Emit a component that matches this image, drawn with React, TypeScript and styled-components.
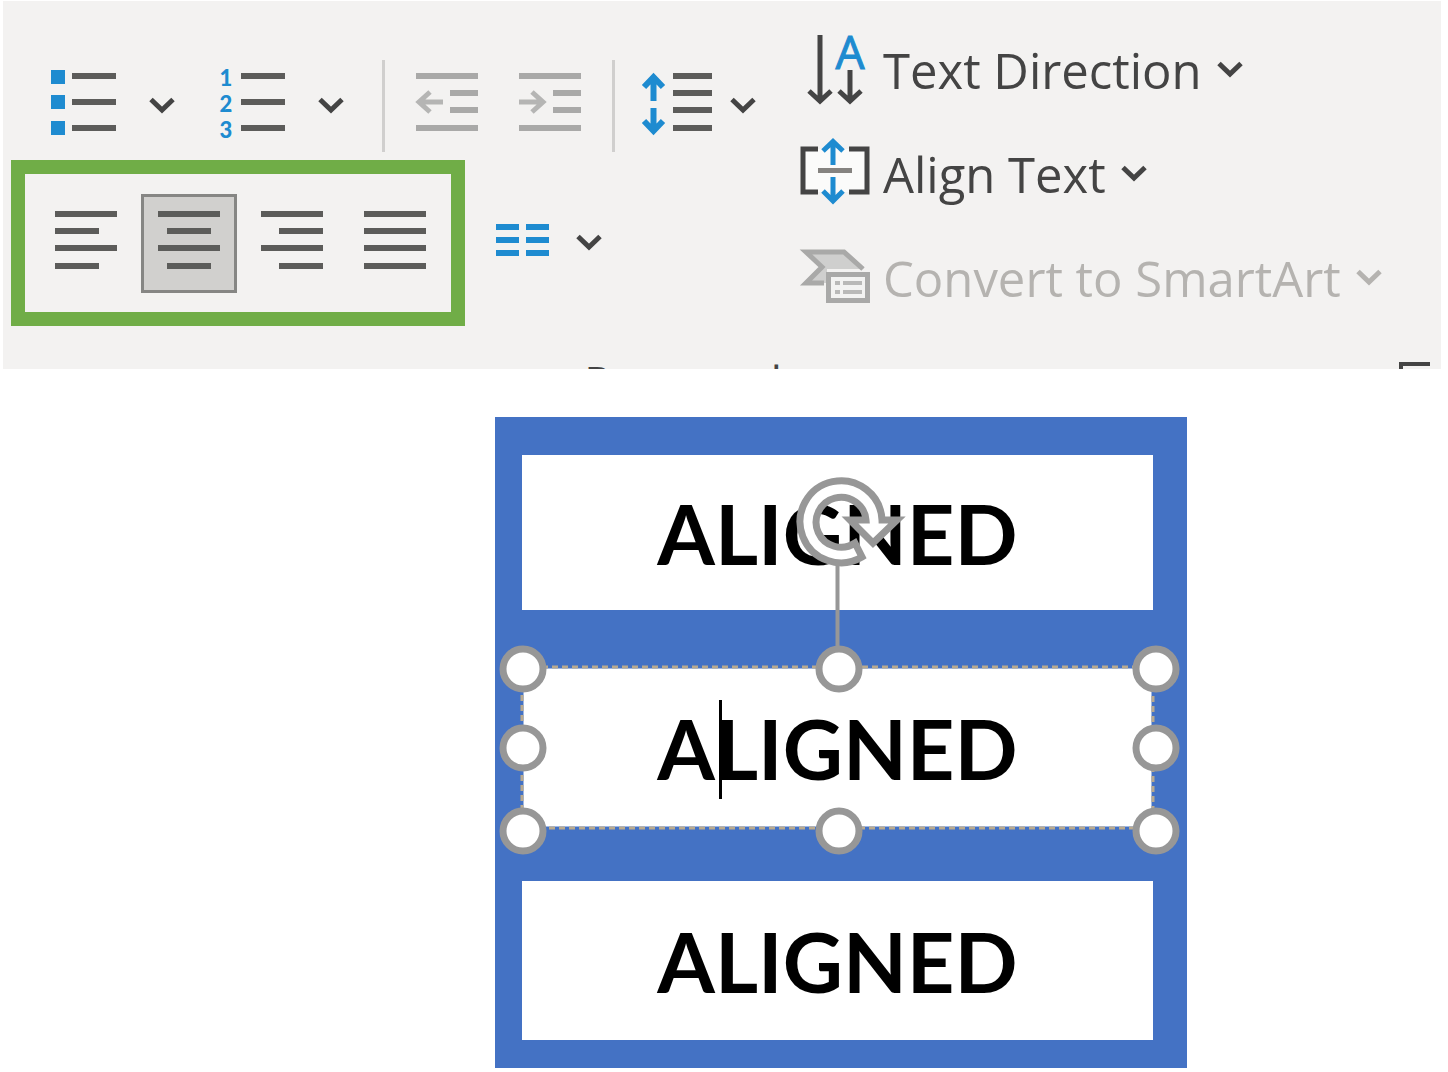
import React from "react";
import styled, { createGlobalStyle } from "styled-components";

const ink = "#444444";
const line = "#5c5c5a";
const blue = "#1e8bd0";
const faded = "#a9a9a8";

const GlobalStyle = createGlobalStyle`
  *, *::before, *::after { box-sizing: border-box; }
  body {
    margin: 0;
    background: #ffffff;
    font-family: "Open Sans", "Noto Sans", sans-serif;
  }
  svg { display: block; flex: none; }
`;

const Ribbon = styled.section`
  margin: 1px 7px 0 3px;
  background: #f3f2f1;
`;

const Tools = styled.div`
  display: flex;
  align-items: flex-start;
  gap: 32px;
`;

const LeftTools = styled.div`
  padding: 59px 0 0 8px;
`;

const ListRow = styled.div`
  display: flex;
  align-items: stretch;
  height: 92px;
  padding-left: 36px;
`;

const ListGroup = styled.div`
  display: flex;
  gap: 32px;
  margin-right: 4px;
`;

const IndentGroup = styled.div`
  display: flex;
  gap: 29px;
`;

const Split = styled.div<{ $gap: number }>`
  display: flex;
  align-items: center;
  gap: ${(p) => p.$gap}px;
`;

const Divider = styled.div`
  width: 3px;
  margin: 0 25px;
  background: #d0cfce;
`;

const ToolButton = styled.button`
  display: flex;
  align-items: center;
  justify-content: center;
  padding: 0;
  border: 0;
  background: transparent;
`;

const AlignRow = styled.div`
  display: flex;
  align-items: center;
  gap: 21px;
  margin-top: 8px;
`;

const Highlight = styled.div`
  display: flex;
  gap: 7px;
  padding: 20px 8px 19px 13px;
  border: 14px solid #70ad47;
`;

const AlignButton = styled(ToolButton)<{ $active?: boolean }>`
  width: 96px;
  height: 99px;
  border: 3px solid ${(p) => (p.$active ? "#868684" : "transparent")};
  background: ${(p) => (p.$active ? "#d1d0ce" : "transparent")};
`;

const TextTools = styled.div`
  display: flex;
  flex-direction: column;
  align-items: flex-start;
  padding-top: 17px;
`;

const TextButton = styled(ToolButton)`
  height: 104px;
  color: ${ink};
  font: 400 49px/64px "Open Sans", "Noto Sans", sans-serif;
  white-space: nowrap;

  &:disabled {
    color: #b5b3b0;
  }
`;

const ButtonText = styled.span`
  margin: 0 6px 0 12px;
`;

const RibbonFooter = styled.div`
  display: flex;
  height: 39px;
  padding-top: 27px;
  overflow: hidden;
`;

const GroupName = styled.div`
  flex: 1;
  color: ${ink};
  font-size: 44px;
  line-height: 48px;
  text-align: center;
`;

const Launcher = styled(ToolButton)`
  width: 62px;
  height: 48px;
  justify-content: flex-start;
`;

const Slide = styled.main`
  width: 692px;
  margin: 48px 0 0 495px;
  padding: 38px 34px 28px 27px;
  background: #4472c4;
`;

const TextShape = styled.div<{ $height: number; $after?: number }>`
  position: relative;
  display: flex;
  align-items: center;
  justify-content: center;
  height: ${(p) => p.$height}px;
  margin-bottom: ${(p) => p.$after ?? 0}px;
  background: #ffffff;
  color: #000000;
  font: 700 83px/100px Lato, sans-serif;
`;

const ShapeInput = styled.input`
  width: 100%;
  height: 100px;
  padding: 0;
  border: 0;
  outline: 0;
  background: transparent;
  color: inherit;
  font: inherit;
  text-align: center;
`;

const SelectionLayer = styled.svg`
  position: absolute;
  left: -27px;
  top: -197px;
  pointer-events: none;
`;

type Bar = [x: number, y: number, width: number];

function Bars({ bars, color = line, h = 6 }: { bars: Bar[]; color?: string; h?: number }) {
  return (
    <g fill={color}>
      {bars.map(([x, y, w]) => (
        <rect key={`${x}-${y}`} x={x} y={y} width={w} height={h} />
      ))}
    </g>
  );
}

function Chevron({ color = ink }: { color?: string }) {
  return (
    <svg width="44" height="44" viewBox="0 0 44 44" fill="none" stroke={color} strokeWidth="5">
      <path d="M11 15.500 L22 26 L33 15.500" />
    </svg>
  );
}

function Menu({ label }: { label: string }) {
  return (
    <ToolButton type="button" aria-label={label} aria-haspopup="menu">
      <Chevron />
    </ToolButton>
  );
}

function BulletsIcon() {
  return (
    <svg width="74" height="92" viewBox="47 60 74 92">
      <g fill={blue}>
        <rect x="51" y="70" width="14" height="14" />
        <rect x="51" y="95" width="14" height="14" />
        <rect x="51" y="121" width="14" height="14" />
      </g>
      <Bars bars={[[72, 73, 44], [72, 99, 44], [72, 125, 44]]} />
    </svg>
  );
}

function NumberingIcon() {
  return (
    <svg width="74" height="92" viewBox="216 60 74 92">
      <g fill={blue} fontFamily="Lato, sans-serif" fontWeight="900" fontSize="22" textAnchor="middle">
        <text x="226" y="86">1</text>
        <text x="226" y="112">2</text>
        <text x="226" y="138">3</text>
      </g>
      <Bars bars={[[241, 73, 44], [241, 99, 44], [241, 125, 44]]} />
    </svg>
  );
}

function IndentIcon({ out = false }: { out?: boolean }) {
  return (
    <svg width="74" height="92" viewBox="410 60 74 92">
      <Bars color={faded} bars={[[416, 73, 62], [450, 90, 28], [450, 107, 28], [416, 125, 62]]} />
      <path
        d={out ? "M443 102 H420 M430 92 L419 102 L430 112" : "M416 102 H439 M429 92 L440 102 L429 112"}
        fill="none"
        stroke="#b5b5b4"
        strokeWidth="5"
      />
    </svg>
  );
}

function SpacingIcon() {
  return (
    <svg width="74" height="92" viewBox="640 60 74 92">
      <path
        d="M653.500 101 V78 M644 87 L653.500 77 L663 87 M653.500 108 V131 M644 121 L653.500 131 L663 121"
        fill="none"
        stroke={blue}
        strokeWidth="6"
      />
      <Bars bars={[[673, 73, 39], [673, 90, 39], [673, 107, 39], [673, 125, 39]]} />
    </svg>
  );
}

function ColumnsIcon() {
  return (
    <svg width="74" height="92" viewBox="486 197 74 92">
      <Bars
        color={blue}
        bars={[[496, 224, 23], [526, 224, 23], [496, 237, 23], [526, 237, 23], [496, 250, 23], [526, 250, 23]]}
      />
    </svg>
  );
}

function AlignIcon({ kind }: { kind: "left" | "center" | "right" | "justify" }) {
  const short = kind === "justify" ? 62 : 44;
  const start = kind === "center" ? 9 : kind === "right" ? 18 : 0;
  return (
    <svg width="62" height="93" viewBox="0 0 62 93">
      <Bars bars={[[0, 14, 62], [start, 31, short], [0, 48, 62], [start, 66, short]]} />
    </svg>
  );
}

function DirectionIcon() {
  return (
    <svg width="74" height="104" viewBox="797 18 74 104" fill="none" stroke={ink} strokeWidth="5">
      <path d="M820 35 V101 M809 91 L820 101 L831 91 M850 70 V101 M839 91 L850 101 L861 91" />
      <text x="850" y="69" fill={blue} stroke={blue} strokeWidth="1" fontFamily="Open Sans, sans-serif" fontSize="46" textAnchor="middle">
        A
      </text>
    </svg>
  );
}

function AlignTextIcon() {
  return (
    <svg width="74" height="104" viewBox="797 122 74 104" fill="none" strokeWidth="5">
      <rect x="803" y="149" width="65" height="43" fill="#fbfbfa" />
      <path d="M818 149 H803 V192 H818 M849 149 H867 V192 H849" stroke={ink} />
      <path d="M818 170.500 H852" stroke="#858380" />
      <path d="M833 165 V143 M823 151 L833 141.500 L843 151 M833 177 V200 M823 191 L833 201 L843 191" stroke={blue} />
    </svg>
  );
}

function SmartArtIcon() {
  return (
    <svg width="74" height="104" viewBox="797 226 74 104" strokeWidth="5">
      <path d="M805 252 H844 L864 269 H827 V283 H806 L822 267 Z" fill="#cfcfce" />
      <path d="M863 269 L844 252 H806 L822 267 L806 283 H824" fill="none" stroke={faded} />
      <rect x="828.500" y="274.500" width="39" height="26" fill="#f3f3f2" stroke={faded} />
      <path d="M835 283 H840 M843 283 H862 M835 292 H840 M843 292 H862" stroke="#b9b9b8" strokeWidth="4" />
    </svg>
  );
}

const handles = [
  [523, 669], [839, 669], [1156, 669],
  [523, 748], [1156, 748],
  [523, 831], [839, 831], [1156, 831],
];

function Selection() {
  return (
    <SelectionLayer width="692" height="400" viewBox="495 470 692 400" aria-hidden="true">
      <rect x="522" y="667" width="631" height="161" fill="none" stroke="#4472c4" strokeWidth="3" />
      <rect x="522" y="667" width="631" height="161" fill="none" stroke="#b9aa8f" strokeWidth="3" strokeDasharray="6 4" />
      <path d="M837.500 563 V650" stroke="#979797" strokeWidth="4" />
      <path
        d="M882 520 A41 41 0 1 0 862 557 L855 543 A25 25 0 1 1 866 520 H850 L873 543 L897 520 Z"
        fill="#ffffff"
        stroke="#979797"
        strokeWidth="7"
      />
      <g fill="#ffffff" stroke="#979797" strokeWidth="7">
        {handles.map(([x, y]) => (
          <circle key={`${x}-${y}`} cx={x} cy={y} r="20" />
        ))}
      </g>
      <rect x="719" y="700" width="3" height="99" fill="#000000" />
    </SelectionLayer>
  );
}

export default function App() {
  return (
    <>
      <GlobalStyle />
      <Ribbon aria-label="Paragraph tools">
        <Tools>
          <LeftTools>
            <ListRow>
              <ListGroup>
                <Split $gap={19}>
                  <ToolButton type="button" aria-label="Bullets"><BulletsIcon /></ToolButton>
                  <Menu label="Bullet styles" />
                </Split>
                <Split $gap={19}>
                  <ToolButton type="button" aria-label="Numbering"><NumberingIcon /></ToolButton>
                  <Menu label="Numbering styles" />
                </Split>
              </ListGroup>
              <Divider />
              <IndentGroup>
                <ToolButton type="button" disabled aria-label="Decrease indent"><IndentIcon out /></ToolButton>
                <ToolButton type="button" disabled aria-label="Increase indent"><IndentIcon /></ToolButton>
              </IndentGroup>
              <Divider />
              <Split $gap={7}>
                <ToolButton type="button" aria-label="Line spacing"><SpacingIcon /></ToolButton>
                <Menu label="Line spacing options" />
              </Split>
            </ListRow>
            <AlignRow>
              <Highlight>
                <AlignButton type="button" aria-label="Align left"><AlignIcon kind="left" /></AlignButton>
                <AlignButton type="button" aria-label="Center" aria-pressed="true" $active><AlignIcon kind="center" /></AlignButton>
                <AlignButton type="button" aria-label="Align right"><AlignIcon kind="right" /></AlignButton>
                <AlignButton type="button" aria-label="Justify"><AlignIcon kind="justify" /></AlignButton>
              </Highlight>
              <Split $gap={7}>
                <ToolButton type="button" aria-label="Columns"><ColumnsIcon /></ToolButton>
                <Menu label="Column options" />
              </Split>
            </AlignRow>
          </LeftTools>
          <TextTools>
            <TextButton type="button">
              <DirectionIcon />
              <ButtonText>Text Direction</ButtonText>
              <Chevron />
            </TextButton>
            <TextButton type="button">
              <AlignTextIcon />
              <ButtonText>Align Text</ButtonText>
              <Chevron />
            </TextButton>
            <TextButton type="button" disabled>
              <SmartArtIcon />
              <ButtonText>Convert to SmartArt</ButtonText>
              <Chevron color="#b5b3b0" />
            </TextButton>
          </TextTools>
        </Tools>
        <RibbonFooter>
          <GroupName>Paragraph</GroupName>
          <Launcher type="button" aria-label="Paragraph settings">
            <svg width="52" height="48" viewBox="0 0 52 48" fill="none" stroke={ink} strokeWidth="4">
              <path d="M22 38 V7 H51" />
            </svg>
          </Launcher>
        </RibbonFooter>
      </Ribbon>
      <Slide>
        <TextShape $height={155} $after={57}>ALIGNED</TextShape>
        <TextShape $height={161} $after={53}>
          <ShapeInput aria-label="Shape text" defaultValue="ALIGNED" />
          <Selection />
        </TextShape>
        <TextShape $height={159}>ALIGNED</TextShape>
      </Slide>
    </>
  );
}
